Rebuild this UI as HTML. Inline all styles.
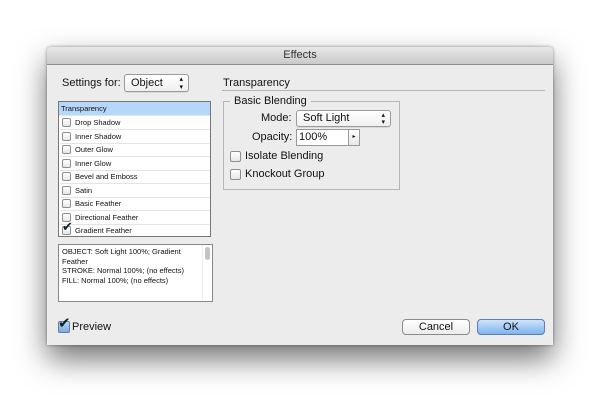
<!DOCTYPE html>
<html><head><style>
body{margin:0;width:600px;height:407px;background:#fff;position:relative;overflow:hidden;font-family:"Liberation Sans",sans-serif;color:#111}
.a{position:absolute}
#win{left:47px;top:47px;width:506px;height:298px;background:#ececec;box-shadow:0 14px 30px rgba(0,0,0,.55),0 0 3px rgba(0,0,0,.4);border-radius:4px 4px 0 0}
#title{left:0;top:0;width:506px;height:17px;background:linear-gradient(#e8e8e8,#c9c9c9);border-bottom:1px solid #8e8e8e;border-radius:4px 4px 0 0;text-align:center;font-size:11px;line-height:17px;color:#333}
.t{font-size:11px;white-space:nowrap}
.pop{background:linear-gradient(#fff,#f0f0f0);border:1px solid #9a9a9a;border-radius:3px;box-shadow:0 1px 0 rgba(0,0,0,.08)}
.cb{width:9px;height:9px;border:1px solid #8f8f8f;border-radius:2px;background:linear-gradient(#fff,#e6e6e6)}
.row{position:absolute;left:1px;width:150px;height:13px;border-bottom:1px solid #e4e4e4;font-size:7.5px;line-height:13px}
.row span{position:absolute;left:15px}
.row .cb{position:absolute;left:2px;top:2px;width:7px;height:7px}
.btn{border:1px solid #8a8a8a;border-radius:4px;height:14px;font-size:11px;line-height:14px;text-align:center;background:linear-gradient(#fff,#ececec)}
</style></head><body>
<div id="win" class="a">
<div id="title" class="a">Effects</div>
<div class="a t" style="left:15px;top:30px">Settings for:</div>
<div class="a pop t" style="left:77px;top:27px;width:63px;height:16px;line-height:16px"><span style="margin-left:6px">Object</span><span class="a" style="right:5px;top:0;font-size:7px;line-height:8px;top:1px">▴<br>▾</span></div>
<div class="a t" style="left:176px;top:30px">Transparency</div>
<div class="a" style="left:175px;top:43px;width:323px;height:1px;background:#b5b5b5"></div>
<div class="a" style="left:11px;top:54px;width:151px;height:134px;background:#fff;border:1px solid #777">
<div class="row" style="top:0;background:#b7d6fb;left:0;width:151px"><span style="left:2px">Transparency</span></div>
<div class="row" style="top:14px"><div class="cb"></div><span>Drop Shadow</span></div>
<div class="row" style="top:27.5px"><div class="cb"></div><span>Inner Shadow</span></div>
<div class="row" style="top:41px"><div class="cb"></div><span>Outer Glow</span></div>
<div class="row" style="top:54.5px"><div class="cb"></div><span>Inner Glow</span></div>
<div class="row" style="top:68px"><div class="cb"></div><span>Bevel and Emboss</span></div>
<div class="row" style="top:81.5px"><div class="cb"></div><span>Satin</span></div>
<div class="row" style="top:95px"><div class="cb"></div><span>Basic Feather</span></div>
<div class="row" style="top:108.5px"><div class="cb"></div><span>Directional Feather</span></div>
<div class="row" style="top:122px;border:0"><div class="cb"></div><span style="left:2px;top:-4px;font-size:13px;color:#123">✔</span><span>Gradient Feather</span></div>
</div>
<div class="a" style="left:11px;top:197px;width:153px;height:56px;background:#fff;border:1px solid #888;font-size:7.5px;line-height:9.5px">
<div style="padding:2px 0 0 3px;width:138px">OBJECT: Soft Light 100%; Gradient Feather<br>STROKE: Normal 100%; (no effects)<br>FILL: Normal 100%; (no effects)</div>
<div class="a" style="right:2px;top:2px;width:5px;height:13px;border-radius:3px;background:#c3c3c3"></div>
<div class="a" style="right:9px;top:0;width:1px;height:56px;background:#eee"></div>
</div>
<div class="a cb" style="left:11px;top:274px;width:10px;height:10px;background:linear-gradient(#bcd6f5,#7fa9dc);border-color:#5a7fae"></div>
<div class="a" style="left:11px;top:267px;font-size:15px;color:#122">✔</div>
<div class="a t" style="left:25px;top:274px">Preview</div>
<div class="a" style="left:176px;top:54px;width:175px;height:87px;border:1px solid #b5b5b5"></div>
<div class="a t" style="left:183px;top:48px;background:#ececec;padding:0 4px">Basic Blending</div>
<div class="a t" style="left:214px;top:65px">Mode:</div>
<div class="a pop t" style="left:249px;top:63px;width:93px;height:15px;line-height:15px"><span style="margin-left:6px">Soft Light</span><span class="a" style="right:5px;top:1px;font-size:7px;line-height:7px">▴<br>▾</span></div>
<div class="a t" style="left:205px;top:84px">Opacity:</div>
<div class="a t" style="left:249px;top:82px;width:51px;height:15px;line-height:15px;background:#fff;border:1px solid #999"><span style="margin-left:2px">100%</span></div>
<div class="a" style="left:301px;top:82px;width:10px;height:15px;background:linear-gradient(#fff,#e8e8e8);border:1px solid #999;font-size:6px;line-height:15px;text-align:center">▸</div>
<div class="a cb" style="left:183px;top:104px"></div>
<div class="a t" style="left:198px;top:103px">Isolate Blending</div>
<div class="a cb" style="left:183px;top:122px"></div>
<div class="a t" style="left:198px;top:121px">Knockout Group</div>
<div class="a btn" style="left:355px;top:272px;width:66px">Cancel</div>
<div class="a btn" style="left:430px;top:272px;width:66px;background:linear-gradient(#cfe3fb,#7fb3ef);border-color:#5b7fb0">OK</div>
</div>
</body></html>
